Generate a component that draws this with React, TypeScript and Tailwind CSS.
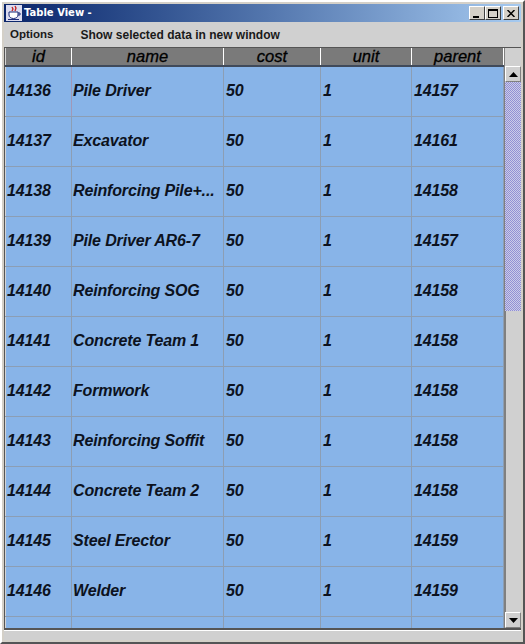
const cols = ["w-[67px] pl-[1px] border-l border-l-[#d4d4d4]", "w-[152px] pl-[1px]", "w-[97px] pl-[2px]", "w-[91px] pl-[2px]", "w-[92px] pl-[2px]"];
const headCols = ["w-[67px] border-l border-l-[#d4d4d4]", "w-[152px]", "w-[97px]", "w-[91px]", "w-[92px]"];
const heads = ["id", "name", "cost", "unit", "parent"];
const rows = [
  ["14136", "Pile Driver", "50", "1", "14157"],
  ["14137", "Excavator", "50", "1", "14161"],
  ["14138", "Reinforcing Pile+...", "50", "1", "14158"],
  ["14139", "Pile Driver AR6-7", "50", "1", "14157"],
  ["14140", "Reinforcing SOG", "50", "1", "14158"],
  ["14141", "Concrete Team 1", "50", "1", "14158"],
  ["14142", "Formwork", "50", "1", "14158"],
  ["14143", "Reinforcing Soffit", "50", "1", "14158"],
  ["14144", "Concrete Team 2", "50", "1", "14158"],
  ["14145", "Steel Erector", "50", "1", "14159"],
  ["14146", "Welder", "50", "1", "14159"],
  ["", "", "", "", ""],
];
const dots = "repeating-conic-gradient(#9290d4 0% 25%, #cccce8 0% 50%)";

function WinBtn({ children, className = "" }: { children: React.ReactNode; className?: string }) {
  return (
    <div className={`w-4 h-[14px] bg-[#d4d0c8] border-t border-l border-white border-r border-b border-r-[#404040] border-b-[#404040] flex items-center justify-center ${className}`}>
      {children}
    </div>
  );
}

function ScrollBtn({ up }: { up: boolean }) {
  return (
    <div className="h-[16px] bg-[#d0d0d0] border-t border-l border-white border-b border-r border-b-[#808080] border-r-[#808080] flex items-center justify-center shrink-0">
      <svg width="9" height="5" viewBox="0 0 9 5">
        <path d={up ? "M4.5 0 L9 5 L0 5 Z" : "M0 0 L9 0 L4.5 5 Z"} fill="#000" />
      </svg>
    </div>
  );
}

export default function App() {
  return (
    <div className="w-[525px] h-[644px] overflow-hidden bg-[#d4d0c8] border-t-2 border-l-2 border-white border-r-2 border-r-[#555] border-b-2 border-b-[#555] p-[2px] flex flex-col font-['Liberation_Sans',Arial,sans-serif]">
      <div className="h-[18px] shrink-0 flex items-center pl-[2px] pr-[2px] bg-gradient-to-r from-[#0a246a] to-[#a6caf0]">
        <svg width="16" height="16" viewBox="0 0 16 16" className="shrink-0">
          <rect width="16" height="16" fill="#dcdcf0" />
          <path d="M3 7h9v3c0 2-2 3.500-4.500 3.500S3 12 3 10z" fill="#fff" stroke="#1c2a78" />
          <path d="M12 8h2v2h-2" fill="none" stroke="#1c2a78" />
          <path d="M6 2l1 2-1 2M9 1l1 2-1 3" fill="none" stroke="#c02020" strokeWidth="1.300" />
          <path d="M2 14.500h11" stroke="#1c2a78" />
        </svg>
        <span className="ml-[2px] text-[10px] font-bold text-white leading-none font-['DejaVu_Sans',sans-serif]">Table View -</span>
        <div className="ml-auto flex items-center">
          <WinBtn>
            <div className="w-[6px] h-[2px] bg-black mt-[7px] -ml-[2px]" />
          </WinBtn>
          <WinBtn>
            <div className="w-[10px] h-[9px] border border-black border-t-2" />
          </WinBtn>
          <WinBtn className="ml-[2px]">
            <svg width="8" height="7" viewBox="0 0 8 7">
              <path d="M0.500 0 L7.500 7 M7.500 0 L0.500 7" stroke="#000" strokeWidth="1.500" />
            </svg>
          </WinBtn>
        </div>
      </div>

      <div className="h-[25px] shrink-0 flex items-center font-bold text-[#1a1a1a] bg-[#d0d0d0]">
        <span className="ml-[6px] text-[11.500px]">Options</span>
        <span className="ml-[27px] text-[12px]">Show selected data in new window</span>
      </div>

      <div className="flex-1 min-h-0 flex border-t border-l border-[#555] border-b-2 border-b-[#555] bg-[#d0d0d0]">
        <div className="w-[499px] shrink-0 flex flex-col overflow-hidden">
          <div className="h-[19px] shrink-0 flex bg-[#7a7a7a] border-b-2 border-[#404a5a]">
            {heads.map((h, i) => (
              <div key={h} className={`${headCols[i]} shrink-0 text-center text-[16.500px] italic leading-[17px] text-black border-r border-white [-webkit-text-stroke:0.3px_black]`}>
                {h}
              </div>
            ))}
          </div>
          <div className="flex-1 min-h-0 overflow-hidden bg-[#88b4e8]">
            {rows.map((r, ri) => (
              <div key={ri} className="h-[50px] flex border-b border-[#8c9eb4]">
                {r.map((c, ci) => (
                  <div
                    key={ci}
                    className={`${cols[ci]} shrink-0 flex items-center pb-[2px] text-[16px] font-bold italic text-[#0c1220] border-r ${ri === 0 && ci === 0 ? "border-r-[#a098b8]" : "border-r-[#8c9eb4]"} whitespace-nowrap overflow-hidden tracking-[-0.15px]`}
                  >
                    {c}
                  </div>
                ))}
              </div>
            ))}
          </div>
        </div>
        <div className="w-[17px] shrink-0 flex flex-col pt-[18px] bg-[#d0d0d0] border-l border-[#808080]">
          <ScrollBtn up />
          <div className="h-[229px] shrink-0" style={{ backgroundImage: dots, backgroundSize: "2px 2px" }} />
          <div className="flex-1 border-l border-[#808080]" />
          <ScrollBtn up={false} />
        </div>
      </div>
      <div className="h-[10px] shrink-0 bg-[#d0d0d0] border-t border-white" />
    </div>
  );
}
